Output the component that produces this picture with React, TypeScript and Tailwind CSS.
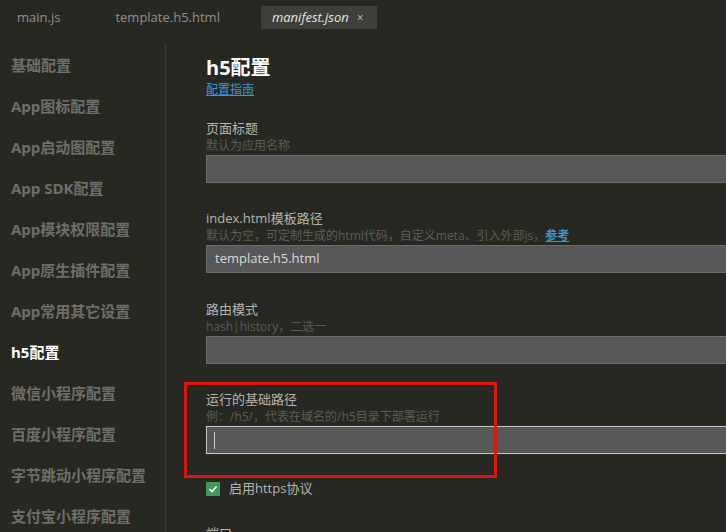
import React from 'react';

const FONT = { fontFamily: '"Open Sans", "Noto Sans CJK SC", sans-serif' };

const menuItems = [
  '基础配置',
  'App图标配置',
  'App启动图配置',
  'App SDK配置',
  'App模块权限配置',
  'App原生插件配置',
  'App常用其它设置',
  'h5配置',
  '微信小程序配置',
  '百度小程序配置',
  '字节跳动小程序配置',
  '支付宝小程序配置',
];

const Field = ({
  label,
  desc,
  value,
  focused,
  className = '',
}: {
  label: string;
  desc: React.ReactNode;
  value?: string;
  focused?: boolean;
  className?: string;
}) => (
  <div className={className}>
    <div className="text-[13px] leading-[18px] text-[#b4b4ae]">{label}</div>
    <div className="mt-[1px] text-[12px] leading-[16px] text-[#5c5c56]">{desc}</div>
    <div
      className={`mt-[1px] flex h-[28px] w-[600px] items-center border bg-[#575757] px-[8px] text-[13px] text-[#d8d8d8] ${
        focused ? 'border-[#c8c8c8]' : 'border-[#6c6c6a]'
      }`}
    >
      {value}
      {focused && <span className="ml-[-1px] h-[17px] w-px bg-[#d0d0d0]" />}
    </div>
  </div>
);

export default function App() {
  return (
    <div className="relative flex h-[532px] w-[726px] flex-col overflow-hidden bg-[#282823]" style={FONT}>
      {/* tabs */}
      <div className="flex h-[44px] shrink-0 items-start pt-[6px] text-[13px] text-[#8f8f89]">
        <div className="flex h-[23px] items-center pl-[17px]">main.js</div>
        <div className="flex h-[23px] items-center pl-[55px]">template.h5.html</div>
        <div className="ml-[41px] flex h-[23px] w-[116px] items-center bg-[#3f3f3a] pl-[11px] text-[#e6e6e2]">
          <span className="italic">manifest.json</span>
          <span className="ml-[8px] text-[12px] text-[#bdbdb7]">×</span>
        </div>
      </div>

      <div className="flex min-h-0 flex-1">
        {/* sidebar */}
        <div className="w-[165px] shrink-0 pl-[11px] pt-[1px]">
          {menuItems.map((m) => (
            <div
              key={m}
              className={`flex h-[41px] items-center text-[15px] font-bold ${
                m === 'h5配置' ? 'text-white' : 'text-[#6e6e69]'
              }`}
            >
              {m}
            </div>
          ))}
        </div>

        {/* main */}
        <div className="flex-1 border-l border-[#3d3d38] pl-[40px] pt-[11px]">
          <div className="text-[20px] font-bold leading-[26px] text-white">h5配置</div>
          <div className="mt-[1px] text-[12px] leading-[16px] text-[#3a95d8] underline">配置指南</div>

          <Field className="mt-[21px]" label="页面标题" desc="默认为应用名称" />
          <Field
            className="mt-[26px]"
            label="index.html模板路径"
            desc={
              <>
                默认为空，可定制生成的html代码，自定义meta、引入外部js，
                <span className="font-bold text-[#3a95d8] underline">参考</span>
              </>
            }
            value="template.h5.html"
          />
          <Field className="mt-[27px]" label="路由模式" desc="hash|history，二选一" />
          <Field
            className="mt-[26px]"
            label="运行的基础路径"
            desc="例：/h5/，代表在域名的/h5目录下部署运行"
            focused
          />

          <div className="mt-[25px] flex h-[20px] items-center gap-[9px]">
            <div className="flex h-[14px] w-[14px] items-center justify-center bg-[#3d9a5b]">
              <svg width="10" height="10" viewBox="0 0 10 10" fill="none">
                <path d="M1.5 5.2 L4 7.5 L8.5 2.5" stroke="white" strokeWidth="1.6" />
              </svg>
            </div>
            <span className="text-[13px] text-[#b4b4ae]">启用https协议</span>
          </div>

          <div className="mt-[25px] text-[13px] leading-[18px] text-[#b4b4ae]">端口</div>
        </div>
      </div>

      {/* annotation */}
      <div className="absolute left-[184px] top-[382px] h-[96px] w-[313px] border-[3px] border-[#e01212]" />
    </div>
  );
}
